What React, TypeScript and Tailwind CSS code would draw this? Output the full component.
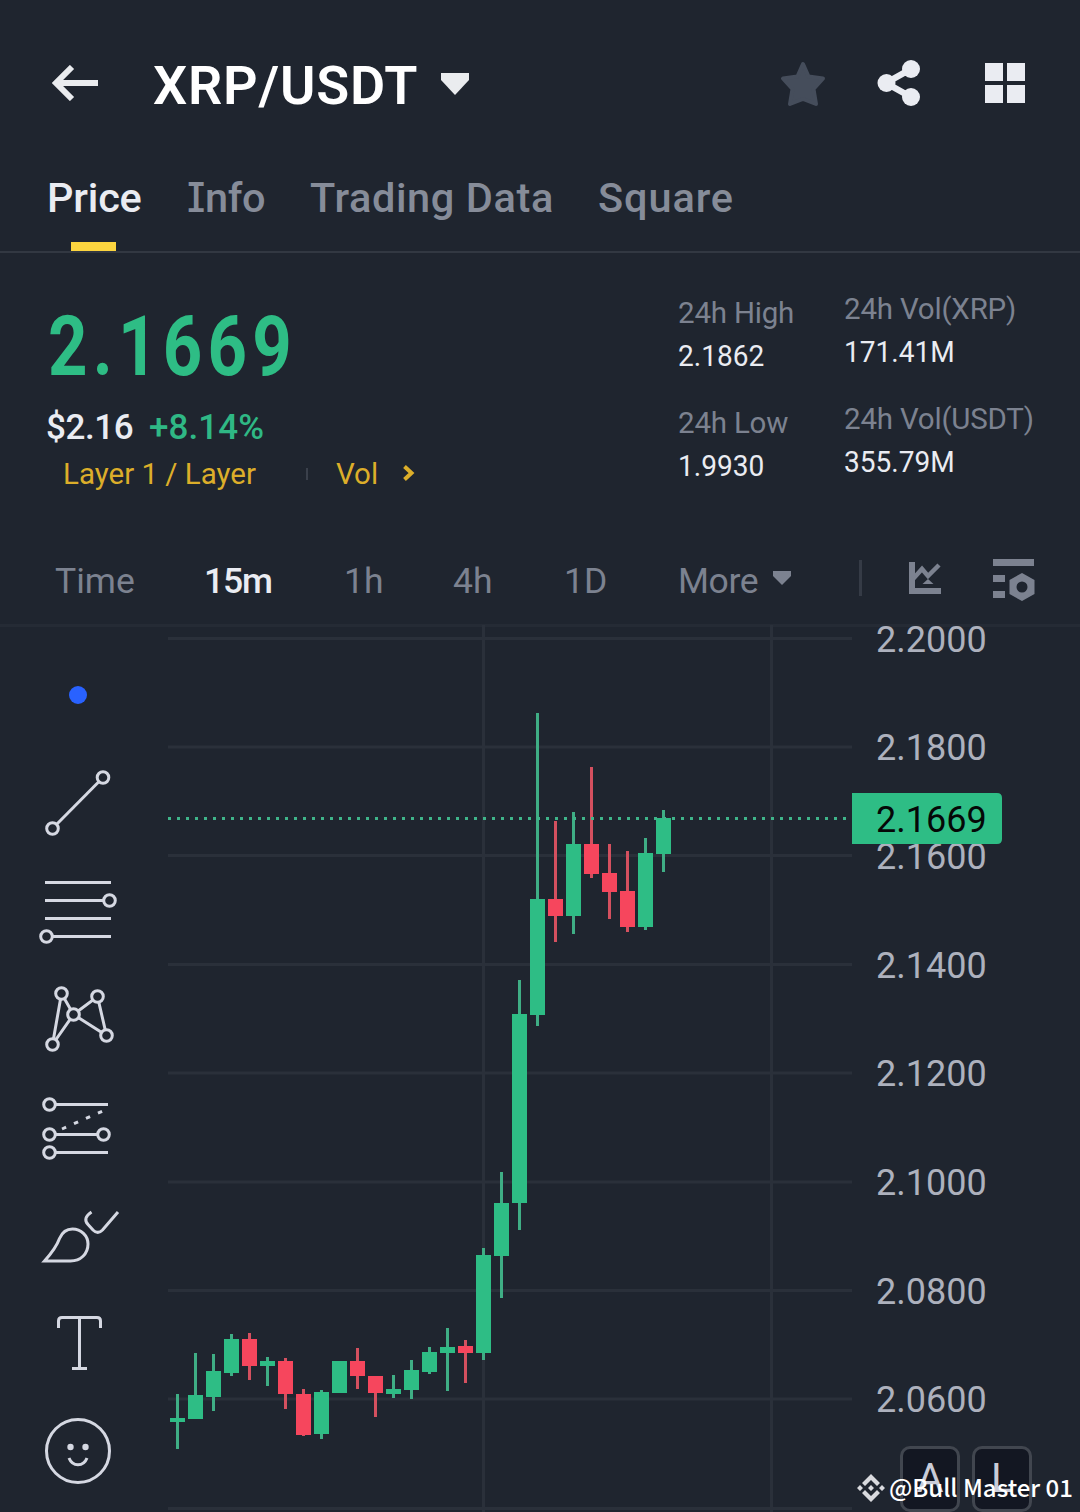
import React from "react";

type Candle = { open: number; close: number; high: number; low: number; up: boolean };

// open/close: top and bottom of the body, high/low: ends of the wick
const c = (up: boolean, open: number, close: number, high: number, low: number): Candle => ({
  up,
  open,
  close,
  high,
  low,
});

const candles: Candle[] = [
  c(true, 1418, 1422, 1394, 1449),
  c(true, 1395, 1419, 1353, 1419),
  c(true, 1371, 1397, 1354, 1411),
  c(true, 1339, 1373, 1334, 1376),
  c(false, 1339, 1366, 1333, 1380),
  c(true, 1361, 1366, 1357, 1386),
  c(false, 1361, 1394, 1358, 1409),
  c(false, 1394, 1435, 1389, 1436),
  c(true, 1392, 1434, 1390, 1439),
  c(true, 1361, 1393, 1361, 1393),
  c(false, 1361, 1376, 1348, 1389),
  c(false, 1376, 1393, 1376, 1417),
  c(true, 1389, 1394, 1375, 1398),
  c(true, 1370, 1390, 1360, 1399),
  c(true, 1352, 1372, 1347, 1374),
  c(true, 1347, 1353, 1328, 1391),
  c(false, 1346, 1353, 1340, 1383),
  c(true, 1255, 1353, 1248, 1360),
  c(true, 1203, 1256, 1172, 1298),
  c(true, 1014, 1203, 980, 1230),
  c(true, 899, 1015, 713, 1026),
  c(false, 899, 916, 821, 942),
  c(true, 844, 916, 812, 934),
  c(false, 844, 874, 767, 878),
  c(false, 873, 892, 844, 919),
  c(false, 891, 927, 851, 932),
  c(true, 853, 927, 838, 930),
  c(true, 818, 854, 810, 872),
];

const axis = [
  { label: "2.2000", y: 638.5 },
  { label: "2.1800", y: 747 },
  { label: "2.1600", y: 855.5 },
  { label: "2.1400", y: 964.5 },
  { label: "2.1200", y: 1073 },
  { label: "2.1000", y: 1182 },
  { label: "2.0800", y: 1290.5 },
  { label: "2.0600", y: 1399 },
  { label: "", y: 1508.5 },
];

const Header = () => (
  <header className="mb-0.5 flex h-[166px] items-center pl-[52px]">
    <svg className="h-9 w-[46px]" viewBox="0 0 46 36" fill="none" stroke="#eaecef" strokeWidth="6">
      <path d="M46 18H5M20 2 4 18l16 16" />
    </svg>
    <h1 className="ml-[55px] w-[288px] pt-1.5 whitespace-nowrap text-[54px] leading-[60px] font-semibold tracking-[0.8px] text-white">
      XRP/USDT
    </h1>
    <svg className="mt-0.5 h-[22px] w-7" viewBox="0 0 28 22" fill="#eaecef">
      <path d="M0 0h28v7L14 22 0 7z" />
    </svg>
    <svg className="mt-0.5 ml-[311px] h-[46px] w-[46px]" viewBox="0 0 46 46">
      <path
        d="M23 3l5.500 12.500 14.500 2-9.500 10.500 2.500 15L23 38 10 43l2.500-15L3 17.500l14.500-2z"
        fill="#454d5b"
        stroke="#454d5b"
        strokeWidth="4"
        strokeLinejoin="round"
      />
    </svg>
    <svg className="ml-[51px] h-[46px] w-11" viewBox="0 0 44 46" fill="#eaecf2">
      <path d="M34 9 9 23l25 14" fill="none" stroke="#eaecf2" strokeWidth="6.500" />
      <circle cx="34" cy="9" r="9" />
      <circle cx="9.500" cy="23" r="9" />
      <circle cx="34" cy="37" r="9" />
    </svg>
    <svg className="ml-16 h-10 w-10" viewBox="0 0 40 40" fill="#eaecf2">
      <path d="M0 0h18v18H0zM22 0h18v18H22zM0 22h18v18H0zM22 22h18v18H22z" />
    </svg>
  </header>
);

const Tabs = () => (
  <nav className="flex h-[85px] border-b-2 border-[#323842] pl-[47px] text-[41.5px] leading-[60px] font-medium text-[#868c99] whitespace-nowrap">
    <div className="flex w-[140px] flex-col justify-between">
      <span className="tracking-[-0.2px] text-[#eaecf2]">Price</span>
      <span className="ml-6 h-[9px] w-[45px] bg-[#fcd53f]" />
    </div>
    <span className="w-[123px] tracking-[-0.4px]">
      <span className="font-[Inter] text-[40.5px] [font-feature-settings:'cv08']">I</span>nfo
    </span>
    <span className="w-[288px] tracking-[0.6px]">Trading Data</span>
    <span className="tracking-[0.9px]">Square</span>
  </nav>
);

const Stat = ({ label, value }: { label: string; value: string }) => (
  <div className="h-[110px] whitespace-nowrap">
    <p className="text-[29.5px] leading-[43px] tracking-[-0.2px] text-[#7c8290]">{label}</p>
    <p className="origin-left scale-x-[0.95] text-[29.5px] leading-[43px] text-[#eaecf2]">{value}</p>
  </div>
);

const Summary = () => (
  <section className="flex h-[284px]">
    <div className="w-[678px] pt-12 pl-[46px]">
      <p className="ml-0.5 origin-left scale-x-[0.82] text-[84px] leading-[92px] font-bold tracking-[6.4px] text-[#2ebd85]">
        2.1669
      </p>
      <p className="mt-3 flex text-[35px] leading-[46px] font-medium">
        <span className="w-[103px] tracking-[-0.4px] text-[#eaecf2]">$2.16</span>
        <span className="tracking-[0.1px] text-[#2fb885]">+8.14%</span>
      </p>
      <div className="-mt-px flex h-12 items-center pl-[17px] text-[29.5px] text-[#dcae2a]">
        <span className="w-[243px] whitespace-nowrap">Layer 1 / Layer</span>
        <span className="h-3 w-0.5 bg-[#3a404b]" />
        <span className="ml-7 w-[67px]">Vol</span>
        <svg className="mb-0.5 h-4 w-3" viewBox="0 0 12 16" fill="none" stroke="#dcae2a" strokeWidth="4">
          <path d="M1.500 1.500 8.500 8l-7 6.500" />
        </svg>
      </div>
    </div>
    <div className="w-[166px] pt-[39px]">
      <Stat label="24h High" value="2.1862" />
      <Stat label="24h Low" value="1.9930" />
    </div>
    <div className="pt-[35px]">
      <Stat label="24h Vol(XRP)" value="171.41M" />
      <Stat label="24h Vol(USDT)" value="355.79M" />
    </div>
  </section>
);

const Timeframes = () => (
  <nav className="flex h-[90px] items-center border-b-[3px] border-[#252b35] pb-[5px] pl-[55px] text-[35.5px] text-[#7c8290] whitespace-nowrap">
    <span className="w-[149px] pt-2">Time</span>
    <span className="w-[140px] pt-2 font-medium tracking-[-1.2px] text-[#eaecf2]">15m</span>
    <span className="w-[109px] pt-2">1h</span>
    <span className="w-[111px] pt-2">4h</span>
    <span className="w-[114px] pt-2">1D</span>
    <span className="w-[95px] pt-2 tracking-[-0.4px]">More</span>
    <svg className="h-3.5 w-[18px]" viewBox="0 0 18 14" fill="#7c8290">
      <path d="M0 0h18v5l-9 9-9-9z" />
    </svg>
    <span className="ml-[68px] h-9 w-[3px] bg-[#353b46]" />
    <svg className="ml-[47px] h-8 w-8" viewBox="0 0 32 32" fill="none" stroke="#7c8290">
      <path d="M3 0v29h29" strokeWidth="6" />
      <path d="M4 17l9-10 6 7L30 3" strokeWidth="4.500" />
      <path d="M13.500 22l5.500-5 5.500 5z" fill="#7c8290" stroke="none" />
    </svg>
    <svg className="mt-[3px] ml-[52px] h-[42px] w-[42px]" viewBox="0 0 42 42" fill="#7c8290">
      <path d="M0 0h41v7H0zM0 16h12v7H0zM0 32h12v7H0z" />
      <path
        fillRule="evenodd"
        d="M29 14l12.500 7v14L29 42l-12.500-7V21zM29 22.500a5.500 5.500 0 1 0 0 11 5.500 5.500 0 0 0 0-11z"
      />
    </svg>
  </nav>
);

const Tool = ({ children }: { children: React.ReactNode }) => (
  <svg className="h-[108px] w-[108px]" viewBox="0 0 108 108" fill="none" stroke="#d5d8e2" strokeWidth="3">
    {children}
  </svg>
);

const Knob = ({ x, y }: { x: number; y: number }) => <circle cx={x} cy={y} r="5.800" fill="#1f252f" />;

const Toolbar = () => (
  <aside className="flex w-[168px] flex-col pt-[14px] pl-6">
    <Tool>
      <circle cx="54" cy="54" r="9" fill="#2962ff" stroke="none" />
    </Tool>
    <Tool>
      <path d="M28.500 79.500 79 28.500" />
      <Knob x={79} y={28.5} />
      <Knob x={28.5} y={79.5} />
    </Tool>
    <Tool>
      <path d="M21 25.500h66M21 43.500h64M21 61.500h66M22 79.500h65" />
      <Knob x={85.5} y={43.5} />
      <Knob x={22.5} y={79.5} />
    </Tool>
    <Tool>
      <path d="M28.500 79.500l9-51 12 21 24-18 9 39-33-21z" />
      <Knob x={37.5} y={28.5} />
      <Knob x={73.5} y={31.5} />
      <Knob x={49.5} y={49.5} />
      <Knob x={82.5} y={70.5} />
      <Knob x={28.5} y={79.5} />
    </Tool>
    <Tool>
      <path d="M25 31.500h59M25 61.500h54M25 79.500h59" />
      <path d="M38 56l42-18.500" strokeDasharray="4.500 8.600" />
      <Knob x={25.5} y={31.5} />
      <Knob x={25.5} y={61.5} />
      <Knob x={79.5} y={61.5} />
      <Knob x={25.5} y={79.5} />
    </Tool>
    <Tool>
      <path d="M67.500 31c-6 4-7.500 8-3.500 12.500l5 5.500c3 3 6.500 3 9.500 0L94 31" />
      <path d="M20.500 80C29 70.500 33 64.500 35.500 57.500c3-7 7-9.500 13-9.500C57 48 64 54.500 64 63c0 10-7.500 17-17.500 17z" />
    </Tool>
    <Tool>
      <path d="M34.500 39v-7q0-3.500 3.500-3.500h35q3.500 0 3.500 3.500v7M55.500 28.500v51M48 79.500h15" />
    </Tool>
    <Tool>
      <circle cx="54" cy="54" r="31.500" />
      <circle cx="46.500" cy="50" r="3.200" fill="#d5d8e2" stroke="none" />
      <circle cx="61.500" cy="50" r="3.200" fill="#d5d8e2" stroke="none" />
      <path d="M45 61c3.500 9 14.500 9 18 0" />
    </Tool>
  </aside>
);

const Chart = () => (
  <svg className="h-[885px] w-[912px] overflow-visible" viewBox="168 627 912 885">
    {axis.map((a) => (
      <rect key={a.y} x="168" y={a.y - 1.5} width="684" height="3" fill="#2a303a" />
    ))}
    <rect x="482" y="625" width="3" height="887" fill="#2a303a" />
    <rect x="770" y="625" width="3" height="887" fill="#2a303a" />
    {candles.map((k, i) => (
      <g key={i}>
        <rect x={176 + i * 18} y={k.high} width="3" height={k.low - k.high} fill={k.up ? "#3fae85" : "#d4505f"} />
        <rect x={170 + i * 18} y={k.open} width="15" height={k.close - k.open} fill={k.up ? "#2ebd85" : "#f6465d"} />
      </g>
    ))}
    <path d="M168 818.500H849" stroke="#3fb58a" strokeWidth="3" strokeDasharray="3 6" />
    <g className="font-[Roboto] text-[36px]" fill="#adb1bd">
      {axis.map((a) => (
        <text key={a.y} x="876" y={Math.floor(a.y + 13.5)}>
          {a.label}
        </text>
      ))}
    </g>
    <path d="M852 793h145q5 0 5 5v41q0 5-5 5H852z" fill="#2ebd85" />
    <text className="font-[Roboto] text-[36px]" x="876" y="832" fill="#050807">
      2.1669
    </text>
  </svg>
);

const ScaleButton = ({ children }: { children: string }) => (
  <span className="flex h-[66px] w-[60px] justify-center rounded-[10px] border-[3px] border-[#41464f] bg-[#131722] pt-[3px] text-[41px] leading-[52px] text-[#c9ccd8]">
    {children}
  </span>
);

export default function App() {
  return (
    <main className="relative h-[1512px] w-[1080px] overflow-hidden bg-[#1f252f] font-[Roboto,sans-serif]">
      <Header />
      <Tabs />
      <Summary />
      <Timeframes />
      <div className="flex h-[885px]">
        <Toolbar />
        <Chart />
      </div>
      <div className="absolute top-[1446px] left-[900px] flex gap-3">
        <ScaleButton>A</ScaleButton>
        <ScaleButton>L</ScaleButton>
      </div>
      <div className="absolute top-[1469px] left-[857px] flex items-center gap-1 whitespace-nowrap text-white">
        <svg className="mt-0.5 h-7 w-7" viewBox="0 0 28 28" fill="#d9dade">
          <path d="M14 0l9 9-3 3-6-6-6 6-3-3zM14 28l9-9-3-3-6 6-6-6-3 3z" />
          <path d="M14 11l3 3-3 3-3-3zM3 11l3 3-3 3-3-3zM25 11l3 3-3 3-3-3z" />
        </svg>
        <span className="font-['Noto_Sans_CJK_SC',sans-serif] text-[24px] leading-9 font-medium">@Bull Master 01</span>
      </div>
    </main>
  );
}
